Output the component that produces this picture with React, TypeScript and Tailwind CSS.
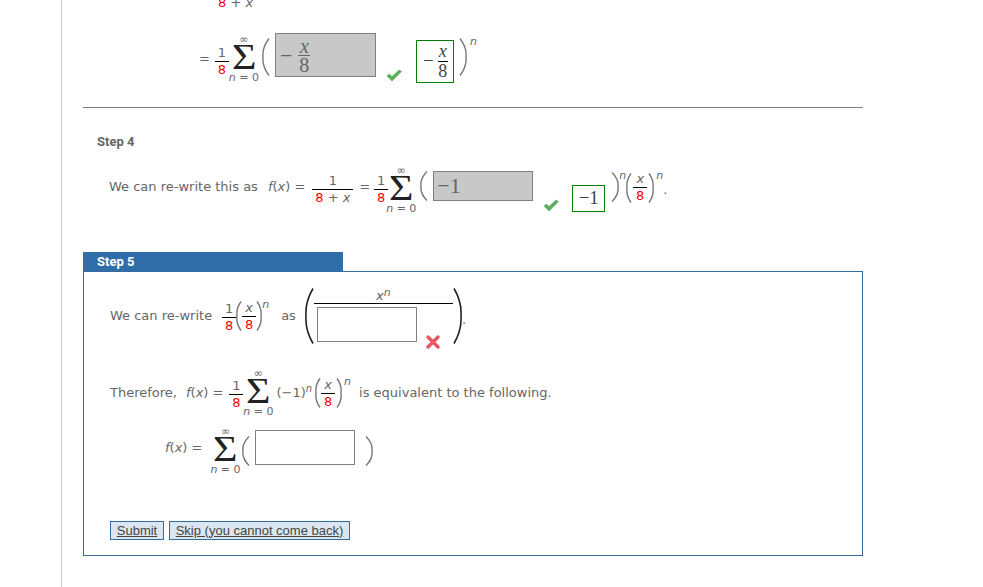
import React from "react";

const serif = "font-['Liberation_Serif',serif]";

// tall bracket, stretched to the height of the group it wraps
function Paren({ h, w = 8, flip = false, dark = false }: { h: number; w?: number; flip?: boolean; dark?: boolean }) {
  const d = flip
    ? `M1 0.5 Q${w} ${h * 0.25} ${w - 1} ${h / 2} Q${w} ${h * 0.75} 1 ${h - 0.5}`
    : `M${w - 1} 0.5 Q0 ${h * 0.25} 1 ${h / 2} Q0 ${h * 0.75} ${w - 1} ${h - 0.5}`;
  return (
    <svg width={w} height={h} viewBox={`0 0 ${w} ${h}`} className="shrink-0">
      <path d={d} fill="none" stroke={dark ? "#222" : "#777"} strokeWidth={dark ? 1.6 : 1.4} />
    </svg>
  );
}

function Frac({ top, bottom, red = true, w = "w-[14px]" }: { top: React.ReactNode; bottom: React.ReactNode; red?: boolean; w?: string }) {
  return (
    <span className={`inline-flex flex-col items-center ${w} text-[13px] leading-[15px]`}>
      <span className="w-full border-b border-black text-center pb-[1px]">{top}</span>
      <span className={`text-center ${red ? "text-[#f00]" : ""}`}>{bottom}</span>
    </span>
  );
}

function Sum() {
  return (
    <span className="inline-flex flex-col items-center w-[24px] ml-[3px] text-[#666]">
      <span className="text-[11px] leading-[9px]">∞</span>
      <span className={`${serif} text-[35px] leading-[28px] text-[#222] scale-x-[1.2]`}>Σ</span>
      <span className="text-[11px] leading-[11px] whitespace-nowrap"><i>n</i> = 0</span>
    </span>
  );
}

function Check() {
  return (
    <svg width="16" height="13" viewBox="0 0 16 13" className="shrink-0">
      <path d="M1 7 L3.5 5 L6 7.5 L13 1 L15.5 2.5 L6 12 Z" fill="#5cb25c" stroke="#4a9a4a" strokeWidth="0.5" />
    </svg>
  );
}

function Cross() {
  return (
    <svg width="14" height="14" viewBox="0 0 14 14" className="shrink-0">
      <path d="M2 2 L12 12 M12 2 L2 12" stroke="#ef5560" strokeWidth="3.4" strokeLinecap="round" />
    </svg>
  );
}

const X = () => <i>x</i>;

export default function App() {
  return (
    <div className="h-[587px] overflow-hidden bg-white pl-[61px] text-[13px] text-[#666] font-['DejaVu_Sans',sans-serif]">
      {/* the clipped first line pulls this column up by 5px, so it runs 5px past the page */}
      <div className="h-[592px] w-[802px] border-l border-[#ccc] pl-[21px]">
        <div className="h-[11px] -mt-[5px] pl-[135px] leading-[15px] whitespace-nowrap">
          <span className="text-[#f00]">8</span> + <X />
        </div>

        {/* first line of the expansion */}
        <div className="flex items-center h-[52px] mt-[27px] pl-[116px]">
          <span className="mr-[5px]">=</span>
          <span className="mt-[1px]"><Frac top="1" bottom="8" /></span>
          <Sum />
          <span className="ml-[6px] -mt-[4px]"><Paren h={38} /></span>
          <div className={`flex items-center gap-[6px] ml-[5px] -mt-[8px] w-[101px] h-[44px] shrink-0 border border-[#808080] bg-[#c8c8c8] pl-[4px] text-[#666] text-[22px] ${serif}`}>
            <span>−</span>
            <span className="inline-flex flex-col items-center w-[12px] text-[20px] leading-[18px]">
              <i className="border-b border-[#666] w-full text-center">x</i>
              <span>8</span>
            </span>
          </div>
          <span className="ml-[10px] mt-[32px]"><Check /></span>
          <div className={`flex items-center gap-[4px] ml-[14px] mt-[5px] w-[38px] h-[43px] shrink-0 border border-[#008000] pl-[6px] text-[#444] text-[19px] ${serif}`}>
            <span>−</span>
            <span className="inline-flex flex-col items-center w-[10px] text-[18px] leading-[19px]">
              <i className="border-b border-black w-full text-center">x</i>
              <span>8</span>
            </span>
          </div>
          <span className="ml-[5px] -mt-[4px]"><Paren h={38} flip /></span>
          <span className="ml-[3px] -mt-[33px] text-[11px] italic">n</span>
        </div>

        <div className="h-px bg-[#808080] w-[780px] mt-[22px]" />

        <div className="mt-[25px] pl-[14px] font-bold text-[13px] leading-[17px] font-['Roboto',sans-serif] text-[#666]">Step 4</div>

        {/* step 4 sentence */}
        <div className="flex items-center h-[52px] mt-[11px] pl-[26px] whitespace-nowrap">
          <span>We can re-write this as</span>
          <span className="ml-[10px]"><i>f</i>(<X />) =</span>
          <span className="ml-[7px] mt-[1px]">
            <Frac w="w-[41px]" top="1" bottom={<><span className="text-[#f00]">8</span><span className="text-[#666]"> + <X /></span></>} red={false} />
          </span>
          <span className="ml-[6px] mr-[4px]">=</span>
          <span className="mt-[1px]"><Frac top="1" bottom="8" /></span>
          <span className="-ml-[2px]"><Sum /></span>
          <span className="ml-[7px] -mt-[3px]"><Paren h={30} /></span>
          <div className={`flex items-center ml-[5px] -mt-[3px] w-[100px] h-[30px] shrink-0 border border-[#808080] bg-[#c8c8c8] pl-[3px] text-[#666] text-[22px] ${serif}`}>−1</div>
          <span className="ml-[10px] mt-[37px]"><Check /></span>
          <div className={`flex items-center justify-center ml-[13px] mt-[23px] w-[33px] h-[27px] shrink-0 border border-[#008000] text-[#444] text-[19px] ${serif}`}>−1</div>
          <span className="ml-[6px]"><Paren h={30} flip /></span>
          <span className="-mt-[22px] text-[11px] italic">n</span>
          <span className="mt-[1px]"><Paren h={30} w={6} /></span>
          <span className="ml-[1px] -mt-[2px]"><Frac top={<X />} bottom="8" /></span>
          <span className="ml-[1px] mt-[1px]"><Paren h={30} w={6} flip /></span>
          <span className="ml-[2px] -mt-[22px] text-[11px] italic">n</span>
          <span className="mt-[6px]">.</span>
        </div>

        <div className="mt-[39px] flex h-[19px] w-[260px] items-center bg-[#2f6ea9] pl-[14px] font-bold text-[13px] text-white font-['Roboto',sans-serif]">Step 5</div>

        {/* answer panel */}
        <div className="h-[285px] w-[780px] border border-[#336c9f] pl-[26px]">
          <div className="flex items-center h-[62px] mt-[13px] whitespace-nowrap">
            <span>We can re-write</span>
            <span className="ml-[10px]"><Frac top="1" bottom="8" /></span>
            <Paren h={30} w={6} />
            <Frac top={<X />} bottom="8" />
            <Paren h={30} w={6} flip />
            <span className="-mt-[22px] text-[11px] italic">n</span>
            <span className="ml-[12px]">as</span>
            <span className="ml-[9px]"><Paren h={56} w={9} dark /></span>
            <div className="flex flex-col w-[139px]">
              <div className="h-[15px] border-b border-black text-center leading-[14px]"><X /><span className="text-[11px] italic relative -top-[4px]">n</span></div>
              <div className="flex h-[39px] pl-[3px]">
                <div className="mt-[3px] w-[100px] h-[35px] shrink-0 border border-[#808080] bg-white" />
                <span className="ml-[9px] mt-[31px] h-[14px]"><Cross /></span>
              </div>
            </div>
            <Paren h={56} w={9} flip dark />
            <span className="mt-[8px]">.</span>
          </div>

          <div className="flex items-center h-[52px] mt-[20px] whitespace-nowrap">
            <span>Therefore,</span>
            <span className="ml-[9px]"><i>f</i>(<X />) =</span>
            <span className="ml-[6px]"><Frac top="1" bottom="8" /></span>
            <Sum />
            <span className="ml-[6px] text-[13px]">(−1)<span className="text-[10px] italic relative -top-[5px]">n</span></span>
            <span className="ml-[3px]"><Paren h={30} w={6} /></span>
            <Frac top={<X />} bottom="8" />
            <span className="ml-[1px]"><Paren h={30} w={6} flip /></span>
            <span className="ml-[2px] -mt-[22px] text-[11px] italic">n</span>
            <span className="ml-[8px]">is equivalent to the following.</span>
          </div>

          <div className="flex items-center h-[52px] mt-[3px] pl-[55px] whitespace-nowrap">
            <span><i>f</i>(<X />) =</span>
            <span className="ml-[8px]"><Sum /></span>
            <span className="ml-[5px] mt-[6px]"><Paren h={30} /></span>
            <div className="ml-[5px] -mt-[2px] w-[100px] h-[35px] shrink-0 border border-[#808080] bg-white" />
            <span className="ml-[10px] mt-[6px]"><Paren h={30} flip /></span>
          </div>

          <div className="flex gap-[5px] mt-[47px] font-['Liberation_Sans',sans-serif] text-[13px] text-[#444]">
            <button className="h-[19px] w-[54px] border border-[#336c9f] bg-[#dbe6f0] underline leading-[16px] whitespace-nowrap">Submit</button>
            <button className="h-[19px] w-[181px] border border-[#336c9f] bg-[#dbe6f0] underline leading-[16px] whitespace-nowrap">Skip (you cannot come back)</button>
          </div>
        </div>
      </div>
    </div>
  );
}
